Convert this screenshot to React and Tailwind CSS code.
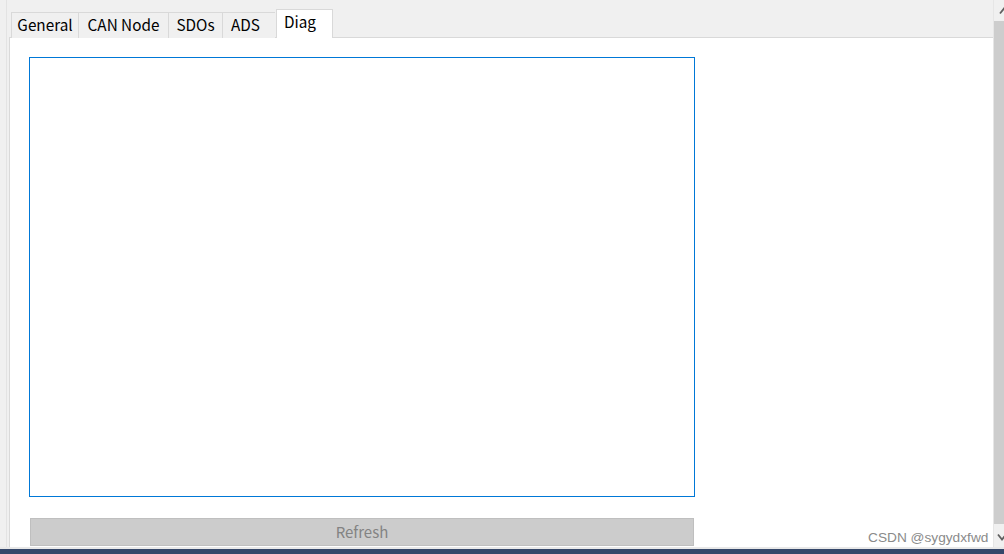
import React from "react";

const tabs = ["General", "CAN Node", "SDOs", "ADS"];
const widths = ["w-[67px]", "w-[90px]", "w-[54px]", "w-[53px]"];
const pads = ["pr-0", "pr-0", "pr-0", "pr-[7px]"];

export default function App() {
  return (
    <div
      className="relative w-[1004px] h-[554px] bg-[#f0f0f0] flex flex-col overflow-hidden"
      style={{ fontFamily: '"Noto Sans CJK SC", "Noto Sans", sans-serif' }}
    >
      <div className="flex flex-1 min-h-0">
        <div className="w-[7px] border-r border-[#e3e3e3] shrink-0" />
        <div className="flex flex-col flex-1 min-w-0 pl-[2px]">
          <div className="flex items-end h-[37px] pl-[2px] relative z-10">
            {tabs.map((t, i) => (
              <div
                key={t}
                className={`${widths[i]} ${pads[i]} h-[26px] border-t border-l border-[#d9d9d9] bg-[#f0f0f0] flex items-center justify-center text-[15.3px] text-black leading-none -mb-px pb-[2px]`}
              >
                {t}
              </div>
            ))}
            <div className="w-[57px] h-[29px] border-t border-l border-r border-[#d9d9d9] bg-white flex items-center justify-start pl-[7px] text-[15.3px] text-black leading-none -mb-px pb-[4px] ml-[1px]">
              Diag
            </div>
          </div>
          <div className="flex-1 bg-white border-t border-l border-[#d9d9d9] pl-[19px] pt-[19px] flex flex-col">
            <div className="w-[666px] h-[440px] border border-[#0078d7] bg-white" />
            <div className="mt-[21px] ml-[1px] w-[664px] h-[28px] bg-[#cccccc] border border-[#bfbfbf] flex items-center justify-center text-[15px] text-[#838383]">
              Refresh
            </div>
          </div>
        </div>
        <div className="w-[11px] shrink-0 flex flex-col border-l border-[#e6e6e6]">
          <div className="h-[21px] bg-[#f0f0f0] relative overflow-hidden">
            <svg className="absolute left-[5px] top-[7px]" width="10" height="8" viewBox="0 0 10 8">
              <path d="M1 6.5 L5 1.5 L9 6.5" fill="none" stroke="#606060" strokeWidth="1.8" />
            </svg>
          </div>
          <div className="flex-1 bg-[#cdcdcd]" />
          <div className="h-[23px] bg-[#f0f0f0] relative overflow-hidden">
            <svg className="absolute left-[3px] top-[9px]" width="10" height="8" viewBox="0 0 10 8">
              <path d="M1 1.5 L5 6.5 L9 1.5" fill="none" stroke="#606060" strokeWidth="1.8" />
            </svg>
          </div>
        </div>
      </div>
      <div className="h-[2px] bg-[#e8e8e8]" />
      <div className="h-[5px] bg-[#35476a]" />
      <div
        className="absolute left-[868px] top-[528px] text-[13.7px] text-[#8a8a8a] leading-[20px]"
        style={{ fontFamily: '"Liberation Sans", Arial, sans-serif' }}
      >
        CSDN @sygydxfwd
      </div>
    </div>
  );
}
